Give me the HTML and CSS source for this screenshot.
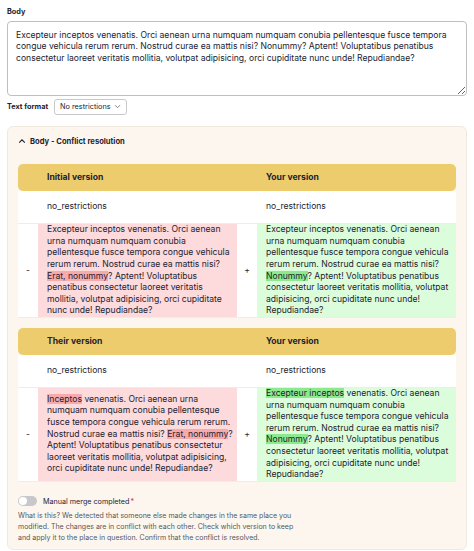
FILE: index.html
```html
<!DOCTYPE html>
<html lang="en">
<head>
<meta charset="UTF-8">
<meta name="viewport" content="width=device-width, initial-scale=1.0">
<title>Body - Conflict resolution</title>
<link rel="stylesheet" href="styles.css">
</head>
<body>
    <div class="field">
        <label class="field-label" for="body">Body</label>
        <textarea class="textarea" id="body">Excepteur inceptos venenatis. Orci aenean urna numquam numquam conubia pellentesque fusce tempora congue vehicula rerum rerum. Nostrud curae ea mattis nisi? Nonummy? Aptent! Voluptatibus penatibus consectetur laoreet veritatis mollitia, volutpat adipisicing, orci cupiditate nunc unde! Repudiandae?</textarea>
        <div class="format">
            <span class="format-label">Text format</span>
            <span class="select">No restrictions
                <svg width="7" height="5" viewBox="0 0 7 5"><path d="M1 1.2l2.5 2.5L6 1.2" fill="none" stroke="#777" stroke-width="0.9"/></svg>
            </span>
        </div>
    </div>

    <div class="conflict">
        <div class="conflict-title">
            <svg width="8" height="6" viewBox="0 0 8 6"><path d="M1.2 4.6L4 1.8l2.8 2.8" fill="none" stroke="#222330" stroke-width="1.1"/></svg>
            Body - Conflict resolution
        </div>

        <table class="diff">
            <thead>
                <tr>
                    <th class="sign"></th>
                    <th>Initial version</th>
                    <th class="sign"></th>
                    <th>Your version</th>
                </tr>
            </thead>
            <tbody>
                <tr>
                    <td class="sign"></td>
                    <td>no_restrictions</td>
                    <td class="sign"></td>
                    <td>no_restrictions</td>
                </tr>
                <tr>
                    <td class="sign">-</td>
                    <td class="deleted">Excepteur inceptos venenatis. Orci aenean urna numquam numquam conubia pellentesque fusce tempora congue vehicula rerum rerum. Nostrud curae ea mattis nisi? <span class="del">Erat, nonummy</span>? Aptent! Voluptatibus penatibus consectetur laoreet veritatis mollitia, volutpat adipisicing, orci cupiditate nunc unde! Repudiandae?</td>
                    <td class="sign">+</td>
                    <td class="added">Excepteur inceptos venenatis. Orci aenean urna numquam numquam conubia pellentesque fusce tempora congue vehicula rerum rerum. Nostrud curae ea mattis nisi? <span class="ins">Nonummy</span>? Aptent! Voluptatibus penatibus consectetur laoreet veritatis mollitia, volutpat adipisicing, orci cupiditate nunc unde! Repudiandae?</td>
                </tr>
            </tbody>
        </table>

        <table class="diff">
            <thead>
                <tr>
                    <th class="sign"></th>
                    <th>Their version</th>
                    <th class="sign"></th>
                    <th>Your version</th>
                </tr>
            </thead>
            <tbody>
                <tr>
                    <td class="sign"></td>
                    <td>no_restrictions</td>
                    <td class="sign"></td>
                    <td>no_restrictions</td>
                </tr>
                <tr>
                    <td class="sign">-</td>
                    <td class="deleted"><span class="del">Inceptos</span> venenatis. Orci aenean urna numquam numquam conubia pellentesque fusce tempora congue vehicula rerum rerum. Nostrud curae ea mattis nisi? <span class="del">Erat, nonummy</span>? Aptent! Voluptatibus penatibus consectetur laoreet veritatis mollitia, volutpat adipisicing, orci cupiditate nunc unde! Repudiandae?</td>
                    <td class="sign">+</td>
                    <td class="added"><span class="ins">Excepteur inceptos</span> venenatis. Orci aenean urna numquam numquam conubia pellentesque fusce tempora congue vehicula rerum rerum. Nostrud curae ea mattis nisi? <span class="ins">Nonummy</span>? Aptent! Voluptatibus penatibus consectetur laoreet veritatis mollitia, volutpat adipisicing, orci cupiditate nunc unde! Repudiandae?</td>
                </tr>
            </tbody>
        </table>

        <div class="merge">
            <span class="toggle"><span class="knob"></span></span>
            <span class="merge-label">Manual merge completed<span class="required">*</span></span>
        </div>
        <div class="description">What is this? We detected that someone else made changes in the same place you modified. The changes are in conflict with each other. Check which version to keep and apply it to the place in question. Confirm that the conflict is resolved.</div>
    </div>
</body>
</html>
```

FILE: styles.css
```css
body {
    margin: 0;
    padding: 6px 7px;
    font-family: Inter, "Noto Sans", sans-serif;
    font-size: 8.6px;
    line-height: 11.6px;
    color: #222330;
    background-color: #fff;
}
.field-label {
    display: block;
    font-size: 7.3px;
    font-weight: 700;
    margin-bottom: 3px;
}
.textarea {
    display: block;
    box-sizing: border-box;
    width: 100%;
    height: 75px;
    padding: 8px 8px;
    font: inherit;
    color: inherit;
    border: 1px solid #bfbfc3;
    border-radius: 4px;
    resize: vertical;
}
.format {
    display: flex;
    align-items: center;
    gap: 6px;
    margin-top: 3px;
    height: 16px;
    font-size: 7.3px;
}
.format-label {
    font-weight: 700;
}
.select {
    display: flex;
    align-items: center;
    gap: 3px;
    height: 16px;
    box-sizing: border-box;
    padding: 0 5px;
    border: 1px solid #c9c9cc;
    border-radius: 3px;
}
.conflict {
    margin-top: 11px;
    padding: 9px 10px 6px;
    background-color: #fdf6ee;
    border: 1px solid #f0e9e0;
    border-radius: 6px;
}
.conflict-title {
    display: flex;
    align-items: center;
    gap: 4px;
    font-size: 7.6px;
    font-weight: 700;
    margin-bottom: 17px;
}
.diff {
    width: 100%;
    border-collapse: separate;
    border-spacing: 0;
    table-layout: fixed;
    margin-bottom: 10px;
}
.diff th {
    height: 27px;
    padding: 0 9px;
    text-align: left;
    font-weight: 700;
    background-color: #edcc6e;
}
.diff th:first-child {
    border-radius: 5px 0 0 5px;
}
.diff th:last-child {
    border-radius: 0 5px 5px 0;
}
.diff .sign {
    width: 20px;
    padding: 0;
    text-align: center;
}
.diff td {
    padding: 0 3px 0 9px;
    background-color: #fff;
    border-bottom: 1px solid #f1ece6;
}
.diff tbody tr:first-child td {
    height: 32px;
}
.diff td.sign {
    padding: 0;
}
.diff td.deleted {
    background-color: #fddadb;
}
.diff td.added {
    background-color: #dcfddc;
}
.del {
    background-color: #f6aaac;
}
.ins {
    background-color: #8de98d;
}
.merge {
    display: flex;
    align-items: center;
    gap: 6px;
    margin-top: 14px;
    font-size: 7.2px;
}
.toggle {
    position: relative;
    width: 19px;
    height: 10px;
    border-radius: 6px;
    background-color: #c8c8cc;
}
.knob {
    position: absolute;
    top: 1px;
    left: 1px;
    width: 8px;
    height: 8px;
    border-radius: 50%;
    background-color: #fff;
}
.required {
    color: #dc2323;
    margin-left: 1px;
}
.description {
    max-width: 276px;
    margin-top: 3px;
    font-size: 7px;
    line-height: 11px;
    color: #55565b;
}
```
